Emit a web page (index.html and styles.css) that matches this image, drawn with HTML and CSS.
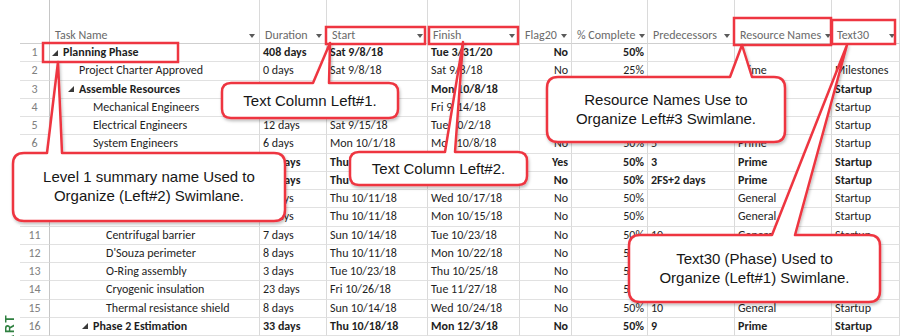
FILE: index.html
```html
<!DOCTYPE html>
<html>
<head>
<meta charset="utf-8">
<link rel="stylesheet" href="styles.css">
</head>
<body>
<div class="page">
  <div class="side"><span class="view-label">GANTT CHART</span></div>
  <div class="sheet">
    <div class="row head">
      <div class="c id"></div>
      <div class="c h"><span>Task Name</span><i class="dd"></i></div>
      <div class="c h"><span>Duration</span><i class="dd"></i></div>
      <div class="c h"><span>Start</span><i class="dd"></i></div>
      <div class="c h"><span>Finish</span><i class="dd"></i></div>
      <div class="c h"><span>Flag20</span><i class="dd"></i></div>
      <div class="c h"><span>% Complete</span><i class="dd"></i></div>
      <div class="c h"><span>Predecessors</span><i class="dd"></i></div>
      <div class="c h"><span>Resource Names</span><i class="dd"></i></div>
      <div class="c h"><span>Text30</span><i class="dd"></i></div>
    </div>
    <div class="row b">
      <div class="c id">1</div>
      <div class="c name l1"><svg class="tri" viewBox="0 0 6 6"><path d="M6 0V6H0Z"/></svg>Planning Phase</div>
      <div class="c">408 days</div><div class="c">Sat 9/8/18</div><div class="c">Tue 3/31/20</div>
      <div class="c r">No</div><div class="c r">50%</div><div class="c"></div><div class="c"></div><div class="c"></div>
    </div>
    <div class="row">
      <div class="c id">2</div>
      <div class="c name l2">Project Charter Approved</div>
      <div class="c">0 days</div><div class="c">Sat 9/8/18</div><div class="c">Sat 9/8/18</div>
      <div class="c r">No</div><div class="c r">25%</div><div class="c"></div><div class="c">Prime</div><div class="c">Milestones</div>
    </div>
    <div class="row b">
      <div class="c id">3</div>
      <div class="c name l2"><svg class="tri" viewBox="0 0 6 6"><path d="M6 0V6H0Z"/></svg>Assemble Resources</div>
      <div class="c">22 days</div><div class="c">Sat 9/8/18</div><div class="c">Mon 10/8/18</div>
      <div class="c r">No</div><div class="c r">50%</div><div class="c">2</div><div class="c">Prime</div><div class="c">Startup</div>
    </div>
    <div class="row">
      <div class="c id">4</div>
      <div class="c name l3">Mechanical Engineers</div>
      <div class="c">5 days</div><div class="c">Sat 9/8/18</div><div class="c">Fri 9/14/18</div>
      <div class="c r">No</div><div class="c r">50%</div><div class="c"></div><div class="c">Prime</div><div class="c">Startup</div>
    </div>
    <div class="row">
      <div class="c id">5</div>
      <div class="c name l3">Electrical Engineers</div>
      <div class="c">12 days</div><div class="c">Sat 9/15/18</div><div class="c">Tue 10/2/18</div>
      <div class="c r">No</div><div class="c r">50%</div><div class="c">4</div><div class="c">Prime</div><div class="c">Startup</div>
    </div>
    <div class="row">
      <div class="c id">6</div>
      <div class="c name l3">System Engineers</div>
      <div class="c">6 days</div><div class="c">Mon 10/1/18</div><div class="c">Mon 10/8/18</div>
      <div class="c r">No</div><div class="c r">50%</div><div class="c">5</div><div class="c">Prime</div><div class="c">Startup</div>
    </div>
    <div class="row b">
      <div class="c id">7</div>
      <div class="c name l2"><svg class="tri" viewBox="0 0 6 6"><path d="M6 0V6H0Z"/></svg>Prototype Design</div>
      <div class="c">33 days</div><div class="c">Thu 10/11/18</div><div class="c">Tue 11/27/18</div>
      <div class="c r">Yes</div><div class="c r">50%</div><div class="c">3</div><div class="c">Prime</div><div class="c">Startup</div>
    </div>
    <div class="row b">
      <div class="c id">8</div>
      <div class="c name l3"><svg class="tri" viewBox="0 0 6 6"><path d="M6 0V6H0Z"/></svg>Heat Shield</div>
      <div class="c">33 days</div><div class="c">Thu 10/11/18</div><div class="c">Tue 11/27/18</div>
      <div class="c r">No</div><div class="c r">50%</div><div class="c">2FS+2 days</div><div class="c">Prime</div><div class="c">Startup</div>
    </div>
    <div class="row">
      <div class="c id">9</div>
      <div class="c name l4">Outer hull</div>
      <div class="c">5 days</div><div class="c">Thu 10/11/18</div><div class="c">Wed 10/17/18</div>
      <div class="c r">No</div><div class="c r">50%</div><div class="c"></div><div class="c">General</div><div class="c">Startup</div>
    </div>
    <div class="row">
      <div class="c id">10</div>
      <div class="c name l4">Inner frame</div>
      <div class="c">3 days</div><div class="c">Thu 10/11/18</div><div class="c">Mon 10/15/18</div>
      <div class="c r">No</div><div class="c r">50%</div><div class="c"></div><div class="c">General</div><div class="c">Startup</div>
    </div>
    <div class="row">
      <div class="c id">11</div>
      <div class="c name l4">Centrifugal barrier</div>
      <div class="c">7 days</div><div class="c">Sun 10/14/18</div><div class="c">Tue 10/23/18</div>
      <div class="c r">No</div><div class="c r">50%</div><div class="c">10</div><div class="c">General</div><div class="c">Startup</div>
    </div>
    <div class="row">
      <div class="c id">12</div>
      <div class="c name l4">D'Souza perimeter</div>
      <div class="c">8 days</div><div class="c">Thu 10/11/18</div><div class="c">Mon 10/22/18</div>
      <div class="c r">No</div><div class="c r">50%</div><div class="c"></div><div class="c">General</div><div class="c">Startup</div>
    </div>
    <div class="row">
      <div class="c id">13</div>
      <div class="c name l4">O-Ring assembly</div>
      <div class="c">3 days</div><div class="c">Tue 10/23/18</div><div class="c">Thu 10/25/18</div>
      <div class="c r">No</div><div class="c r">50%</div><div class="c">12</div><div class="c">General</div><div class="c">Startup</div>
    </div>
    <div class="row">
      <div class="c id">14</div>
      <div class="c name l4">Cryogenic insulation</div>
      <div class="c">23 days</div><div class="c">Fri 10/26/18</div><div class="c">Tue 11/27/18</div>
      <div class="c r">No</div><div class="c r">50%</div><div class="c">13</div><div class="c">General</div><div class="c">Startup</div>
    </div>
    <div class="row">
      <div class="c id">15</div>
      <div class="c name l4">Thermal resistance shield</div>
      <div class="c">8 days</div><div class="c">Sun 10/14/18</div><div class="c">Wed 10/24/18</div>
      <div class="c r">No</div><div class="c r">50%</div><div class="c">10</div><div class="c">General</div><div class="c">Startup</div>
    </div>
    <div class="row b">
      <div class="c id">16</div>
      <div class="c name l3"><svg class="tri" viewBox="0 0 6 6"><path d="M6 0V6H0Z"/></svg>Phase 2 Estimation</div>
      <div class="c">33 days</div><div class="c">Thu 10/18/18</div><div class="c">Mon 12/3/18</div>
      <div class="c r">No</div><div class="c r">50%</div><div class="c">9</div><div class="c">Prime</div><div class="c">Startup</div>
    </div>
  </div>

  <svg class="overlay" viewBox="0 0 900 336" width="900" height="336">
    <defs>
      <filter id="sh" x="-10%" y="-10%" width="120%" height="130%">
        <feDropShadow dx="1" dy="2" stdDeviation="1.5" flood-color="#000" flood-opacity="0.25"/>
      </filter>
    </defs>
    <g class="hl">
      <rect x="43" y="43" width="135" height="19"/>
      <rect x="326" y="27" width="99" height="17"/>
      <rect x="429" y="27" width="89" height="17"/>
      <rect x="734" y="18" width="97" height="27"/>
      <rect x="832" y="20" width="63" height="24"/>
    </g>
    <g class="callout" filter="url(#sh)">
      <path d="M231,83 L313,83 L330,43 L329,83 L389,83 Q398,83 398,92 L398,109 Q398,118 389,118 L231,118 Q222,118 222,109 L222,92 Q222,83 231,83 Z"/>
      <path d="M359,152 L445,152 L463,42 L455,152 L518,152 Q527,152 527,161 L527,176 Q527,185 518,185 L359,185 Q350,185 350,176 L350,161 Q350,152 359,152 Z"/>
      <path d="M558,77 L730,77 L742,45 L752,77 L774,77 Q785,77 785,88 L785,131 Q785,142 774,142 L558,142 Q547,142 547,131 L547,88 Q547,77 558,77 Z"/>
      <path d="M24,153 L47,153 L58,62 L62,153 L274,153 Q285,153 285,164 L285,210 Q285,221 274,221 L24,221 Q13,221 13,210 L13,164 Q13,153 24,153 Z"/>
      <path d="M640,235 L772,235 L847,45 L795,235 L869,235 Q880,235 880,246 L880,291 Q880,302 869,302 L640,302 Q629,302 629,291 L629,246 Q629,235 640,235 Z"/>
    </g>
  </svg>

  <div class="note n1">Text Column Left#1.</div>
  <div class="note n2">Text Column Left#2.</div>
  <div class="note n3">Resource Names Use to<br>Organize Left#3 Swimlane.</div>
  <div class="note n4">Level 1 summary name Used to<br>Organize (Left#2) Swimlane.</div>
  <div class="note n5">Text30 (Phase) Used to<br>Organize (Left#1) Swimlane.</div>
</div>
</body>
</html>
```

FILE: styles.css
```css
* { box-sizing: border-box; }
html, body { margin: 0; padding: 0; background: #fff; }

.page {
  position: relative;
  width: 900px;
  height: 336px;
  overflow: hidden;
  display: flex;
  font-family: "Carlito", "Lato", "Liberation Sans", sans-serif;
  font-size: 12px;
  color: #1e1e1e;
}

.side {
  width: 20px;
  flex: 0 0 20px;
  display: flex;
  flex-direction: column;
  align-items: center;
  overflow: hidden;
}
.view-label {
  margin-top: 314px;
  writing-mode: vertical-rl;
  transform: rotate(180deg);
  font-family: "Liberation Sans", sans-serif;
  font-weight: bold;
  font-size: 12px;
  letter-spacing: 1.5px;
  color: #2f8040;
  white-space: nowrap;
  flex: 0 0 auto;
}

.sheet { flex: 1; display: flex; flex-direction: column; overflow: hidden; }

.row {
  display: grid;
  grid-template-columns: 30px 210px 67px 101px 92px 52px 76px 87px 97px 1fr;
  height: 18.25px;
  flex: 0 0 18.25px;
}
.row.b .c { font-weight: bold; }
.row.b .c.id { font-weight: normal; }

.c {
  border-right: 1px solid #dadada;
  border-bottom: 1px solid #e1e1e1;
  padding: 0 3px;
  line-height: 17.25px;
  white-space: nowrap;
  overflow: hidden;
}
.c.r { text-align: right; }
.c.id {
  text-align: center;
  color: #808080;
  border-right: 1px solid #c6c6c6;
  padding: 0;
}

.row.head { height: 44px; flex: 0 0 44px; }
.row.head .c {
  border-bottom: 1px solid #cfcfcf;
}
.c.h {
  display: flex;
  align-items: flex-end;
  justify-content: space-between;
  padding: 0 4px 0 5px;
  color: #6a6a6a;
  line-height: 16px;
}
.dd {
  display: block;
  width: 0;
  height: 0;
  border-left: 3.5px solid transparent;
  border-right: 3.5px solid transparent;
  border-top: 4px solid #5a5a5a;
  margin-bottom: 5px;
  margin-left: 4px;
}

.name { display: flex; align-items: center; }
.name.l1 { padding-left: 13px; }
.name.l2 { padding-left: 29px; }
.name.l3 { padding-left: 43px; }
.name.l4 { padding-left: 56px; }
.tri {
  width: 6px;
  height: 6px;
  flex: 0 0 6px;
  margin-left: -11px;
  margin-right: 5px;
  fill: #3a3a3a;
}

.overlay {
  position: absolute;
  left: 0;
  top: 0;
  pointer-events: none;
}
.hl rect { fill: none; stroke: #ee3641; stroke-width: 2.5; }
.callout path {
  fill: #fff;
  stroke: #ee3641;
  stroke-width: 2.5;
  stroke-linejoin: round;
}

.note {
  position: absolute;
  display: flex;
  align-items: center;
  justify-content: center;
  text-align: center;
  font-family: "Liberation Sans", Arial, sans-serif;
  font-size: 15px;
  line-height: 19px;
  color: #161616;
  font-weight: normal;
}
.n1 { left: 222px; top: 83px; width: 176px; height: 35px; }
.n2 { left: 350px; top: 152px; width: 177px; height: 33px; }
.n3 { left: 547px; top: 77px; width: 238px; height: 64px; }
.n4 { left: 13px; top: 153px; width: 272px; height: 66px; }
.n5 { left: 629px; top: 235px; width: 251px; height: 66px; }
```
